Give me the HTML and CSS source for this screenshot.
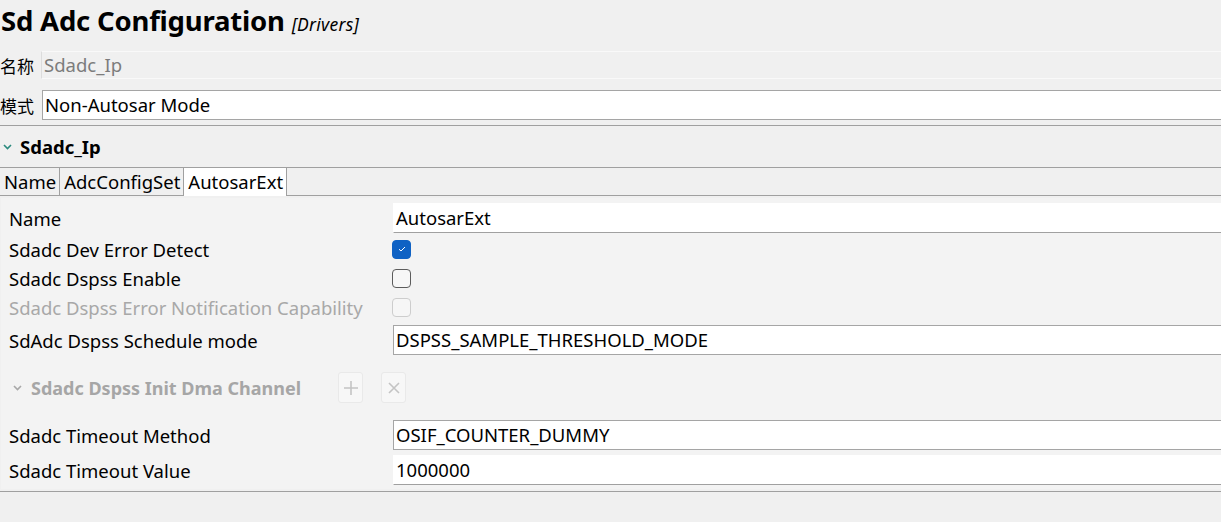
FILE: index.html
```html
<!DOCTYPE html>
<html lang="zh">
<head>
    <meta charset="UTF-8">
    <meta name="viewport" content="width=device-width, initial-scale=1.0">
    <title>Sd Adc Configuration</title>
    <link rel="stylesheet" href="styles.css">
</head>
<body>
    <div class="page">
        <h1 class="title">Sd Adc Configuration <span class="title-sub">[Drivers]</span></h1>

        <div class="top-field">
            <label>名称</label>
            <div class="readonly">Sdadc_Ip</div>
        </div>
        <div class="top-field">
            <label>模式</label>
            <div class="text-box">Non-Autosar Mode</div>
        </div>

        <div class="section-head">
            <svg class="chevron" width="9" height="6" viewBox="0 0 9 6"><path d="M1 1l3.5 3.5L8 1" fill="none" stroke="#2b8a7e" stroke-width="1.6"/></svg>
            <span>Sdadc_Ip</span>
        </div>

        <div class="tabs">
            <div class="tab">Name</div>
            <div class="tab">AdcConfigSet</div>
            <div class="tab active">AutosarExt</div>
        </div>

        <div class="panel-wrap">
            <div class="panel">
                <div class="row row-input">
                    <div class="label">Name</div>
                    <div class="text-box flat">AutosarExt</div>
                </div>
                <div class="row">
                    <div class="label">Sdadc Dev Error Detect</div>
                    <div><span class="check checked"><svg width="10" height="8" viewBox="0 0 10 8"><path d="M2 4.2l2 1.8 4-4" fill="none" stroke="#fff" stroke-width="1"/></svg></span></div>
                </div>
                <div class="row">
                    <div class="label">Sdadc Dspss Enable</div>
                    <div><span class="check"></span></div>
                </div>
                <div class="row disabled">
                    <div class="label">Sdadc Dspss Error Notification Capability</div>
                    <div><span class="check"></span></div>
                </div>
                <div class="row row-input schedule">
                    <div class="label">SdAdc Dspss Schedule mode</div>
                    <div class="text-box">DSPSS_SAMPLE_THRESHOLD_MODE</div>
                </div>

                <div class="sub-head">
                    <svg class="chevron" width="9" height="6" viewBox="0 0 9 6"><path d="M1 1l3.5 3.5L8 1" fill="none" stroke="#a8a8a8" stroke-width="1.6"/></svg>
                    <span>Sdadc Dspss Init Dma Channel</span>
                    <div class="tools">
                        <span class="tool-btn"><svg width="14" height="14" viewBox="0 0 14 14"><path d="M7 0v14M0 7h14" stroke="#c4c4c4" stroke-width="1.6"/></svg></span>
                        <span class="tool-btn"><svg width="12" height="12" viewBox="0 0 12 12"><path d="M1 1l10 10M11 1L1 11" stroke="#c4c4c4" stroke-width="1.6"/></svg></span>
                    </div>
                </div>

                <div class="row row-input">
                    <div class="label">Sdadc Timeout Method</div>
                    <div class="text-box">OSIF_COUNTER_DUMMY</div>
                </div>
                <div class="row row-input last">
                    <div class="label">Sdadc Timeout Value</div>
                    <div class="text-box flat">1000000</div>
                </div>
            </div>
        </div>
    </div>
</body>
</html>
```

FILE: styles.css
```css
html, body {
    margin: 0;
    background-color: #f0f0f0;
    overflow: hidden;
}
body {
    font-family: "Noto Sans", "Noto Sans CJK SC", sans-serif;
    font-size: 18.5px;
    color: #000;
}
.page {
    width: 1225px;
}
.title {
    margin: 0;
    height: 51px;
    padding-left: 1px;
    font-size: 27.5px;
    font-weight: bold;
    line-height: 42px;
    letter-spacing: -0.2px;
}
.title-sub {
    font-size: 17.5px;
    font-weight: normal;
    font-style: italic;
    letter-spacing: 0.3px;
}
.top-field {
    display: grid;
    grid-template-columns: 41px 1fr;
    align-items: center;
    margin-bottom: 11px;
}
.top-field + .top-field {
    margin-bottom: 5px;
}
.top-field label {
    font-family: "Noto Sans CJK SC", sans-serif;
    font-size: 17px;
}
.readonly {
    height: 26px;
    line-height: 26px;
    padding-left: 2px;
    color: #7c7c7c;
    border: 1px solid #f9f9f9;
    border-left-color: #dcdcdc;
}
.text-box {
    height: 28px;
    line-height: 28px;
    padding-left: 2px;
    background-color: #fff;
    border: 1px solid #a5a5a5;
}
.top-field .text-box {
    margin-left: 1px;
}
.text-box.flat {
    border-color: #fff;
    border-bottom-color: #a0a0a0;
}
.section-head {
    display: flex;
    align-items: center;
    gap: 8px;
    height: 41px;
    padding-left: 3px;
    border-top: 1px solid #a0a0a0;
    border-bottom: 1px solid #a0a0a0;
    font-size: 18.5px;
    font-weight: bold;
}
.tabs {
    display: flex;
    height: 27px;
    border-bottom: 1px solid #a0a0a0;
}
.tab {
    padding: 0 3px 0 4px;
    line-height: 27px;
    border-right: 1px solid #a0a0a0;
}
.tab.active {
    background-color: #fff;
    height: 28px;
}
.panel-wrap {
    padding: 2px 0 2px 1px;
    border-bottom: 1px solid #a0a0a0;
}
.panel {
    padding: 5px 0 4px 8px;
    background-color: #f3f3f3;
}
.row {
    display: grid;
    grid-template-columns: 384px 1fr;
    align-items: center;
    height: 26px;
    margin-bottom: 3px;
}
.row-input {
    height: 30px;
}
.row.schedule {
    margin-top: 5px;
}
.row-input.last {
    margin-top: 5px;
    margin-bottom: 0;
}
.row.disabled .label {
    color: #a8a8a8;
}
.check {
    display: flex;
    align-items: center;
    justify-content: center;
    box-sizing: border-box;
    width: 19px;
    height: 19px;
    border: 1px solid #5c5c5c;
    border-radius: 4px;
    background-color: #f7f7f7;
    margin-left: -1px;
}
.check.checked {
    background-color: #0f62c4;
    border-color: #0f62c4;
}
.row.disabled .check {
    border-color: #cdcdcd;
    background-color: #f6f6f6;
}
.sub-head {
    display: flex;
    align-items: center;
    height: 59px;
    margin-bottom: 3px;
    padding-left: 4px;
    color: #a6a6a6;
    font-size: 18px;
    font-weight: bold;
}
.sub-head span {
    margin-left: 9px;
}
.tools {
    display: flex;
    gap: 9px;
    margin-left: 28px;
}
.tool-btn {
    display: flex;
    align-items: center;
    justify-content: center;
    width: 23px;
    height: 29px;
    border: 1px solid #e9e9e9;
    border-radius: 3px;
    background-color: #f7f7f7;
}
```
